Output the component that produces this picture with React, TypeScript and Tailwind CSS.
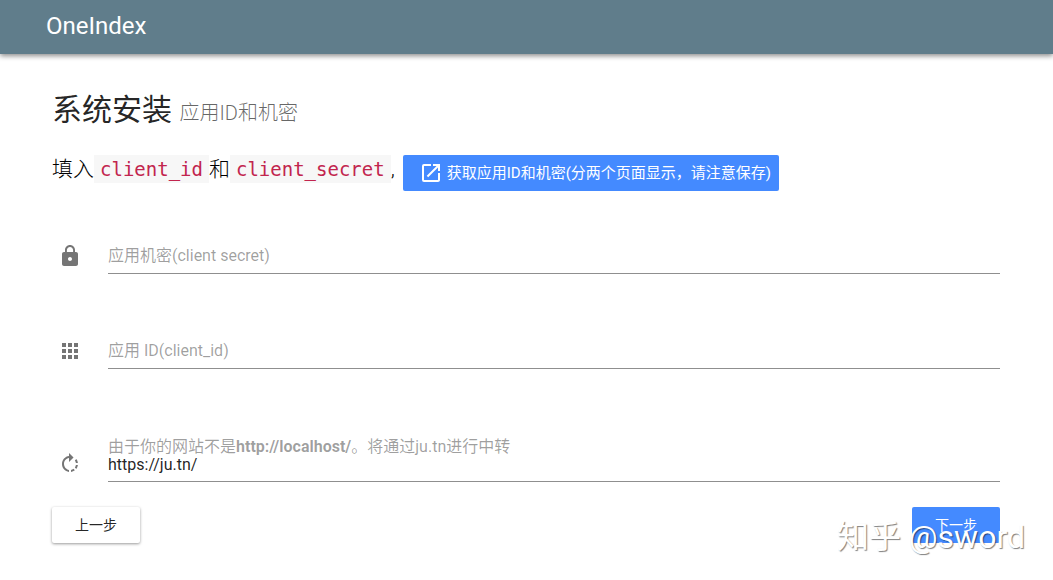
import type { ReactNode } from 'react';
import { MdApps, MdLock, MdOpenInNew, MdRotateRight } from 'react-icons/md';

type FieldProps = {
  id: string;
  icon: ReactNode;
  label: ReactNode;
  defaultValue?: string;
};

// Text field with a leading icon. An empty field shows its label on the line itself.
function Field({ id, icon, label, defaultValue }: FieldProps) {
  return (
    <div className="flex items-end">
      <span className="mb-[6px] ml-[6px] mr-[26px] text-2xl text-[#757575]">{icon}</span>
      {defaultValue ? (
        <div className="flex min-w-0 flex-1 flex-col">
          <label htmlFor={id} className="text-base leading-[18px] text-black/38">
            {label}
          </label>
          <input
            id={id}
            type="text"
            defaultValue={defaultValue}
            className="h-[26px] w-full border-b border-[#8f8f8f] bg-transparent pb-2 text-base leading-[16px] text-black/87 outline-none"
          />
        </div>
      ) : (
        <div className="grid min-w-0 flex-1">
          <input
            id={id}
            type="text"
            placeholder=" "
            className="peer col-start-1 row-start-1 h-9 w-full border-b border-[#8f8f8f] bg-transparent text-base text-black/87 outline-none"
          />
          <label
            htmlFor={id}
            className="invisible col-start-1 row-start-1 self-center justify-self-start text-base text-black/38 peer-placeholder-shown:visible"
          >
            {label}
          </label>
        </div>
      )}
    </div>
  );
}

function Code({ children }: { children: ReactNode }) {
  return (
    <code className="bg-[#f7f7f7] px-[6px] py-[3px] font-['DejaVu_Sans_Mono','Liberation_Mono',monospace] text-[19px] font-normal text-[#c2254e]">
      {children}
    </code>
  );
}

export default function App() {
  return (
    <div className="relative min-h-screen bg-white font-['Roboto','Noto_Sans_CJK_SC',sans-serif] text-black/87">
      <header className="flex h-[54px] items-center bg-[#607d8b] px-[46px] pb-[2px] shadow-[0_2px_5px_rgba(0,0,0,0.45)]">
        <a href="#" className="text-2xl text-white">
          OneIndex
        </a>
      </header>

      <main className="pl-[52px] pr-[53px] pt-[35px]">
        <h1 className="text-[30px] leading-[42px]">
          系统安装 <small className="text-[20px] font-light text-black/60">应用ID和机密</small>
        </h1>

        <div className="mt-[21px] flex flex-wrap items-start text-[21px] leading-[28px]">
          <p className="font-light text-black">
            填入
            <Code>client_id</Code>
            和
            <Code>client_secret</Code>
            <span>,</span>
          </p>
          <a
            href="#"
            className="ml-2 flex h-9 items-center rounded-xs bg-[#448aff] pl-4 pr-2 text-[15px] text-white"
          >
            <MdOpenInNew className="mr-1 text-2xl" />
            获取应用ID和机密(分两个页面显示，请注意保存)
          </a>
        </div>

        <form onSubmit={(e) => e.preventDefault()}>
          <div className="mt-[47px]">
            <Field id="client-secret" icon={<MdLock />} label="应用机密(client secret)" />
          </div>
          <div className="mt-[59px]">
            <Field id="client-id" icon={<MdApps />} label="应用 ID(client_id)" />
          </div>
          <div className="mt-[69px]">
            <Field
              id="redirect-uri"
              icon={<MdRotateRight />}
              label={
                <>
                  由于你的网站不是<b className="font-bold">http://localhost/</b>。将通过ju.tn进行中转
                </>
              }
              defaultValue="https://ju.tn/"
            />
          </div>

          <div className="mt-[25px] flex justify-between">
            <button
              type="button"
              className="h-9 w-[88px] rounded-xs bg-white text-sm shadow-[0_1px_3px_rgba(0,0,0,0.4)]"
            >
              上一步
            </button>
            <button type="submit" className="h-9 w-[88px] rounded-xs bg-[#448aff] text-sm text-white">
              下一步
            </button>
          </div>
        </form>
      </main>

      {/* Watermark */}
      <div className="pointer-events-none absolute right-[28px] top-[515px] text-[32px] leading-[44px] text-white [text-shadow:1px_1px_1px_rgba(0,0,0,0.5)]">
        知乎 @sword
      </div>
    </div>
  );
}
